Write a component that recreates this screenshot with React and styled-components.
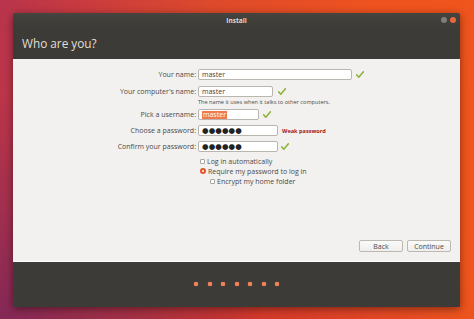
import React from "react";
import styled, { createGlobalStyle } from "styled-components";

const Global = createGlobalStyle`
  html, body { margin: 0; padding: 0; }
  body {
    width: 474px; height: 319px; overflow: hidden;
    font-family: "Open Sans", "DejaVu Sans", sans-serif;
  }
`;

const Desktop = styled.div`
  width: 474px; height: 319px; box-sizing: border-box;
  padding: 13px 0 0 13px;
  background:
    radial-gradient(ellipse 260px 140px at 230px 330px, rgba(205,50,45,0.9), rgba(205,50,45,0) 100%),
    linear-gradient(100deg, #b8344c 0%, #c83a40 15%, #dd4a2b 40%, #ee521f 70%, #f0561c 100%);
  position: relative;
  &::before {
    content: ""; position: absolute; inset: 0;
    background: linear-gradient(180deg, rgba(120,30,90,0) 30%, rgba(110,35,95,0.75) 100%);
    -webkit-mask-image: linear-gradient(90deg, #000 0%, rgba(0,0,0,0.6) 30%, transparent 55%);
    mask-image: linear-gradient(90deg, #000 0%, rgba(0,0,0,0.6) 30%, transparent 55%);
  }
`;

const Window = styled.div`
  position: relative;
  width: 447px; height: 294px;
  display: flex; flex-direction: column;
  background: #3c3b37;
  border-radius: 3px 3px 0 0;
  box-shadow: 0 2px 8px rgba(0,0,0,0.45);
  overflow: hidden;
`;

const TitleBar = styled.div`
  height: 14px; flex: none;
  display: flex; align-items: center; justify-content: center;
  position: relative;
  background: linear-gradient(#45443f, #3c3b37);
  color: #dfdbd2; font-size: 6.5px; font-weight: 700;
`;

const Controls = styled.div`
  position: absolute; right: 4px; top: 4px;
  display: flex; gap: 3px;
`;

const Ctl = styled.span`
  width: 6px; height: 6px; border-radius: 50%;
  background: ${p => (p.$close ? "#e9683b" : "#7f7e7a")};
`;

const Heading = styled.div`
  height: 32px; flex: none;
  display: flex; align-items: center;
  padding-left: 9px;
  color: #e2ded6; font-size: 11.8px;
`;

const Content = styled.div`
  height: 203px; flex: none; box-sizing: border-box;
  background: #f2f1ef;
  border-bottom: 1px solid #fbfbfa;
  padding-top: 10px;
  display: flex; flex-direction: column;
  position: relative;
`;

const Row = styled.div`
  display: flex; align-items: center;
  height: ${p => p.$h || 11}px;
  margin-top: ${p => p.$mt || 0}px;
`;

const Label = styled.div`
  width: 185px; flex: none; box-sizing: border-box;
  text-align: right; padding-right: 2px;
  font-size: 7px; color: #4a4a48; white-space: nowrap;
`;

const Input = styled.div`
  width: ${p => p.$w}px; height: 11px; box-sizing: border-box;
  flex: none;
  background: #fff; border: 1px solid #b9b6b0; border-radius: 2px;
  display: flex; align-items: center; padding-left: 3px;
  font-size: 7px; color: #3c3c3c;
`;

const Selected = styled.span`
  background: #f07a4e; color: #fff; padding: 0 1px; line-height: 8px;
`;

const Mask = styled.span`
  font-family: "DejaVu Sans", sans-serif;
  font-size: 7.5px; letter-spacing: 0.1px; color: #222; line-height: 8px;
`;

const Hint = styled.div`
  margin-left: 185px; height: 8px; margin-top: 1px;
  font-size: 5.6px; color: #4a4a48; display: flex; align-items: center;
  white-space: nowrap;
`;

const Weak = styled.span`
  margin-left: 4px; font-size: 5.6px; font-weight: 700; color: #a2181c;
`;

const CheckWrap = styled.span`
  margin-left: ${p => p.$ml || 4}px; display: flex; align-items: center;
`;

const Option = styled.div`
  display: flex; align-items: center;
  height: ${p => p.$h || 10}px;
  margin-left: ${p => p.$ml}px;
  margin-top: ${p => p.$mt || 0}px;
  font-size: 7px; color: #4a4a48;
`;

const Box = styled.span`
  width: 5px; height: 5px; box-sizing: border-box; margin-right: 2px;
  background: #fff; border: 1px solid #a9a6a0; border-radius: 1px;
`;

const Radio = styled.span`
  width: 6px; height: 6px; box-sizing: border-box; margin-right: 2px;
  border-radius: 50%; background: #fff; border: 2px solid #e2552a;
`;

const Buttons = styled.div`
  position: absolute; right: 9px; bottom: 9px;
  display: flex; gap: 4px;
`;

const Button = styled.div`
  width: ${p => p.$w}px; height: 12px; box-sizing: border-box;
  border: 1px solid #bcb9b3; border-radius: 2px;
  background: linear-gradient(#fafaf9, #efeeec);
  display: flex; align-items: center; justify-content: center;
  font-size: 7px; color: #4a4a48;
`;

const Footer = styled.div`
  flex: 1; display: flex; justify-content: center; align-items: flex-start;
  padding-top: 20px; gap: 9.5px;
`;

const Dot = styled.span`
  width: 4px; height: 4px; border-radius: 1.3px;
  background: #f0825a; box-shadow: 0 0 1px rgba(240,120,80,0.6);
`;

const Check = () => (
  <svg width="8" height="7" viewBox="0 0 8 7">
    <path d="M0.6 3.8 L2.8 6.2 L7.4 0.8" fill="none" stroke="#8db53c" strokeWidth="1.6" strokeLinecap="round" strokeLinejoin="round" />
  </svg>
);

export default function App() {
  const dots = Array.from({ length: 7 });
  return (
    <>
      <Global />
      <Desktop>
        <Window>
          <TitleBar>
            Install
            <Controls>
              <Ctl />
              <Ctl $close />
            </Controls>
          </TitleBar>
          <Heading>Who are you?</Heading>
          <Content>
            <Row>
              <Label>Your name:</Label>
              <Input $w={154}>master</Input>
              <CheckWrap $ml={4}><Check /></CheckWrap>
            </Row>
            <Row $mt={6}>
              <Label>Your computer's name:</Label>
              <Input $w={75}>master</Input>
              <CheckWrap $ml={5}><Check /></CheckWrap>
            </Row>
            <Hint>The name it uses when it talks to other computers.</Hint>
            <Row $mt={3}>
              <Label>Pick a username:</Label>
              <Input $w={61}><Selected>master</Selected></Input>
              <CheckWrap $ml={4}><Check /></CheckWrap>
            </Row>
            <Row $mt={5}>
              <Label>Choose a password:</Label>
              <Input $w={80}><Mask>●●●●●●</Mask></Input>
              <Weak>Weak password</Weak>
            </Row>
            <Row $mt={5}>
              <Label>Confirm your password:</Label>
              <Input $w={80}><Mask>●●●●●●</Mask></Input>
              <CheckWrap $ml={3}><Check /></CheckWrap>
            </Row>
            <Option $ml={187} $mt={4}><Box />Log in automatically</Option>
            <Option $ml={187}><Radio />Require my password to log in</Option>
            <Option $ml={197}><Box />Encrypt my home folder</Option>
            <Buttons>
              <Button $w={44}>Back</Button>
              <Button $w={44}>Continue</Button>
            </Buttons>
          </Content>
          <Footer>
            {dots.map((_, i) => <Dot key={i} />)}
          </Footer>
        </Window>
      </Desktop>
    </>
  );
}
